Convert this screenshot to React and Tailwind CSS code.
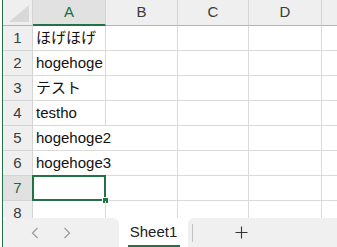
import React from 'react'

const colW = ['w-[73px]', 'w-[72px]', 'w-[71px]', 'w-[73px]']
const colNames = ['A', 'B', 'C', 'D']

const data = [
  { a: 'ほげほげ' },
  { a: 'hogehoge' },
  { a: 'テスト' },
  { a: 'testho' },
  { a: 'hogehoge2', spill: true },
  { a: 'hogehoge3', spill: true },
  { a: '', selected: true },
  { a: '' },
]

function HeaderRow() {
  return (
    <div className="flex h-[26px] shrink-0 bg-[#efefef]">
      <div className="relative w-[30px] shrink-0 border-r border-b border-r-[#d4d4d4] border-b-[#b3b3b3]">
        <svg className="absolute right-[3px] bottom-[3px]" width="20" height="17" viewBox="0 0 20 17">
          <polygon points="20,0 20,17 0,17" fill="#d8d8d8" />
        </svg>
      </div>
      {colNames.map((c, i) => (
        <div
          key={c}
          className={
            colW[i] +
            ' shrink-0 flex items-center justify-center border-r border-r-[#d4d4d4] text-[15px] ' +
            (i === 0
              ? 'bg-[#e1e1e1] border-b-2 border-b-[#217346] text-[#1d6b3f]'
              : 'border-b border-b-[#b3b3b3] text-[#3b3b3b]')
          }
        >
          {c}
        </div>
      ))}
      <div className="flex-1 border-b border-b-[#b3b3b3]" />
    </div>
  )
}

function Row({ n, row }) {
  return (
    <div className="flex h-[25px] shrink-0">
      <div
        className={
          'w-[30px] shrink-0 flex items-center justify-center border-r border-b border-r-[#d4d4d4] border-b-[#d4d4d4] text-[15px] ' +
          (row.selected ? 'bg-[#e1e1e1] text-[#1d6b3f]' : 'bg-[#efefef] text-[#3b3b3b]')
        }
      >
        {n}
      </div>
      <div
        className={
          colW[0] +
          ' relative shrink-0 flex items-center pl-[3px] border-b border-b-[#dadada] border-r text-[15px] text-[#111] whitespace-nowrap ' +
          (row.spill ? 'border-r-transparent' : 'border-r-[#dadada]')
        }
      >
        <span className="relative z-10">{row.a}</span>
        {row.selected && (
          <>
            <div className="absolute -top-[1px] -left-[1px] -right-[1px] -bottom-[1px] border-2 border-[#217346]" />
            <div className="absolute -right-[4px] -bottom-[4px] w-[7px] h-[7px] bg-[#217346] border border-white" />
          </>
        )}
      </div>
      {colW.slice(1).map((w, i) => (
        <div key={i} className={w + ' shrink-0 border-r border-b border-[#dadada]'} />
      ))}
      <div className="flex-1 border-b border-[#dadada]" />
    </div>
  )
}

function TabBar() {
  return (
    <div className="flex h-[29px] shrink-0 bg-white">
      <div className="w-[116px] shrink-0 bg-[#f0f0f0] rounded-tl-[5px] rounded-tr-[6px] flex items-center pl-[28px] gap-[24px]">
        <svg width="8" height="12" viewBox="0 0 8 12">
          <path d="M6.5 1 L1.5 6 L6.5 11" fill="none" stroke="#9a9a9a" strokeWidth="1.2" />
        </svg>
        <svg width="8" height="12" viewBox="0 0 8 12">
          <path d="M1.5 1 L6.5 6 L1.5 11" fill="none" stroke="#9a9a9a" strokeWidth="1.2" />
        </svg>
      </div>
      <div className="w-[69px] shrink-0 flex flex-col items-center justify-start pt-[4px]">
        <span className="text-[15px] leading-[20px] text-[#222]">Sheet1</span>
        <div className="mt-[3px] w-[52px] h-[2px] bg-[#217346]" />
      </div>
      <div className="flex-1 bg-[#f0f0f0] rounded-tl-[6px] flex items-center">
        <div className="ml-[4px] w-[1px] h-[18px] bg-[#c2c2c2]" />
        <svg className="ml-[42px]" width="13" height="13" viewBox="0 0 13 13">
          <path d="M6.5 0.5 V12.5 M0.5 6.5 H12.5" stroke="#333" strokeWidth="1.1" />
        </svg>
      </div>
    </div>
  )
}

export default function App() {
  return (
    <div className="w-[337px] h-[247px] overflow-hidden bg-white flex font-['Liberation_Sans','Noto_Sans_CJK_JP',sans-serif]">
      <div className="w-[2px] shrink-0" />
      <div className="flex-1 flex flex-col border-l border-[#217346] min-w-0">
        <div className="flex-1 flex flex-col overflow-hidden">
          <HeaderRow />
          {data.map((row, i) => (
            <Row key={i} n={i + 1} row={row} />
          ))}
        </div>
        <TabBar />
      </div>
    </div>
  )
}
